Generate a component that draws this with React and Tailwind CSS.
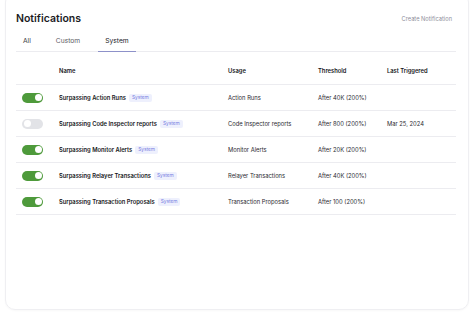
import React from "react";

const rows = [
  { on: true, name: "Surpassing Action Runs", usage: "Action Runs", th: "After 40K (200%)", last: "" },
  { on: false, name: "Surpassing Code Inspector reports", usage: "Code Inspector reports", th: "After 800 (200%)", last: "Mar 25, 2024" },
  { on: true, name: "Surpassing Monitor Alerts", usage: "Monitor Alerts", th: "After 20K (200%)", last: "" },
  { on: true, name: "Surpassing Relayer Transactions", usage: "Relayer Transactions", th: "After 40K (200%)", last: "" },
  { on: true, name: "Surpassing Transaction Proposals", usage: "Transaction Proposals", th: "After 100 (200%)", last: "" },
];

function Toggle({ on }) {
  return (
    <div
      className={
        on
          ? "w-[21px] h-[10px] rounded-full bg-[#4e9a3b] flex items-center justify-end px-[1.5px]"
          : "w-[21px] h-[10px] rounded-full bg-[#e2e3e7] flex items-center justify-start px-[1.5px]"
      }
    >
      <div className="w-[7px] h-[7px] rounded-full bg-white" />
    </div>
  );
}

export default function App() {
  return (
    <div
      className="w-[474px] h-[317px] overflow-hidden bg-white text-[#2a2a2e]"
      style={{ fontFamily: "Inter, 'Noto Sans', sans-serif" }}
    >
      <div className="ml-[5px] w-[464px] h-[318px] -mt-[8px] rounded-[10px] border border-[#efeff2] shadow-[0_1px_2px_rgba(0,0,0,0.03)] pt-[16px] pl-[10px] pr-[12px] flex flex-col">
        <div className="h-[20px] flex items-center justify-between">
          <div className="text-[10.5px] font-semibold text-[#1c1c1f] leading-none">Notifications</div>
          <div className="text-[5.7px] text-[#8f8f9c] pr-[4px] leading-none">Create Notification</div>
        </div>
        <div className="h-[23px] flex items-end gap-[11px] border-b border-[#ececf0]">
          <div className="px-[7px] pb-[6px] text-[6.7px] text-[#3a3a40] leading-none">All</div>
          <div className="px-[7px] pb-[6px] text-[6.7px] text-[#5a5a62] leading-none">Custom</div>
          <div className="px-[7px] pb-[6px] text-[6.7px] text-[#222226] leading-none border-b border-[#8d91c9] -mb-px">System</div>
        </div>
        <div className="grid grid-cols-[43px_169px_90px_69px_1fr] h-[33px] items-center pt-[6px] border-b border-[#ececf0] text-[5.8px] font-semibold text-[#16161a] leading-none">
          <div />
          <div>Name</div>
          <div>Usage</div>
          <div>Threshold</div>
          <div>Last Triggered</div>
        </div>
        {rows.map((r) => (
          <div
            key={r.name}
            className="grid grid-cols-[43px_169px_90px_69px_1fr] h-[26px] items-center border-b border-[#ececf0] text-[5.8px] leading-none text-[#2a2a30]"
          >
            <div className="pl-[6px]">
              <Toggle on={r.on} />
            </div>
            <div className="flex items-center gap-[3px]">
              <span className="font-semibold text-[#16161a]">{r.name}</span>
              <span className="h-[8px] px-[3px] rounded-[2px] bg-[#eef0fd] text-[#7b82e2] text-[4.8px] flex items-center">System</span>
            </div>
            <div>{r.usage}</div>
            <div>{r.th}</div>
            <div>{r.last}</div>
          </div>
        ))}
      </div>
    </div>
  );
}
